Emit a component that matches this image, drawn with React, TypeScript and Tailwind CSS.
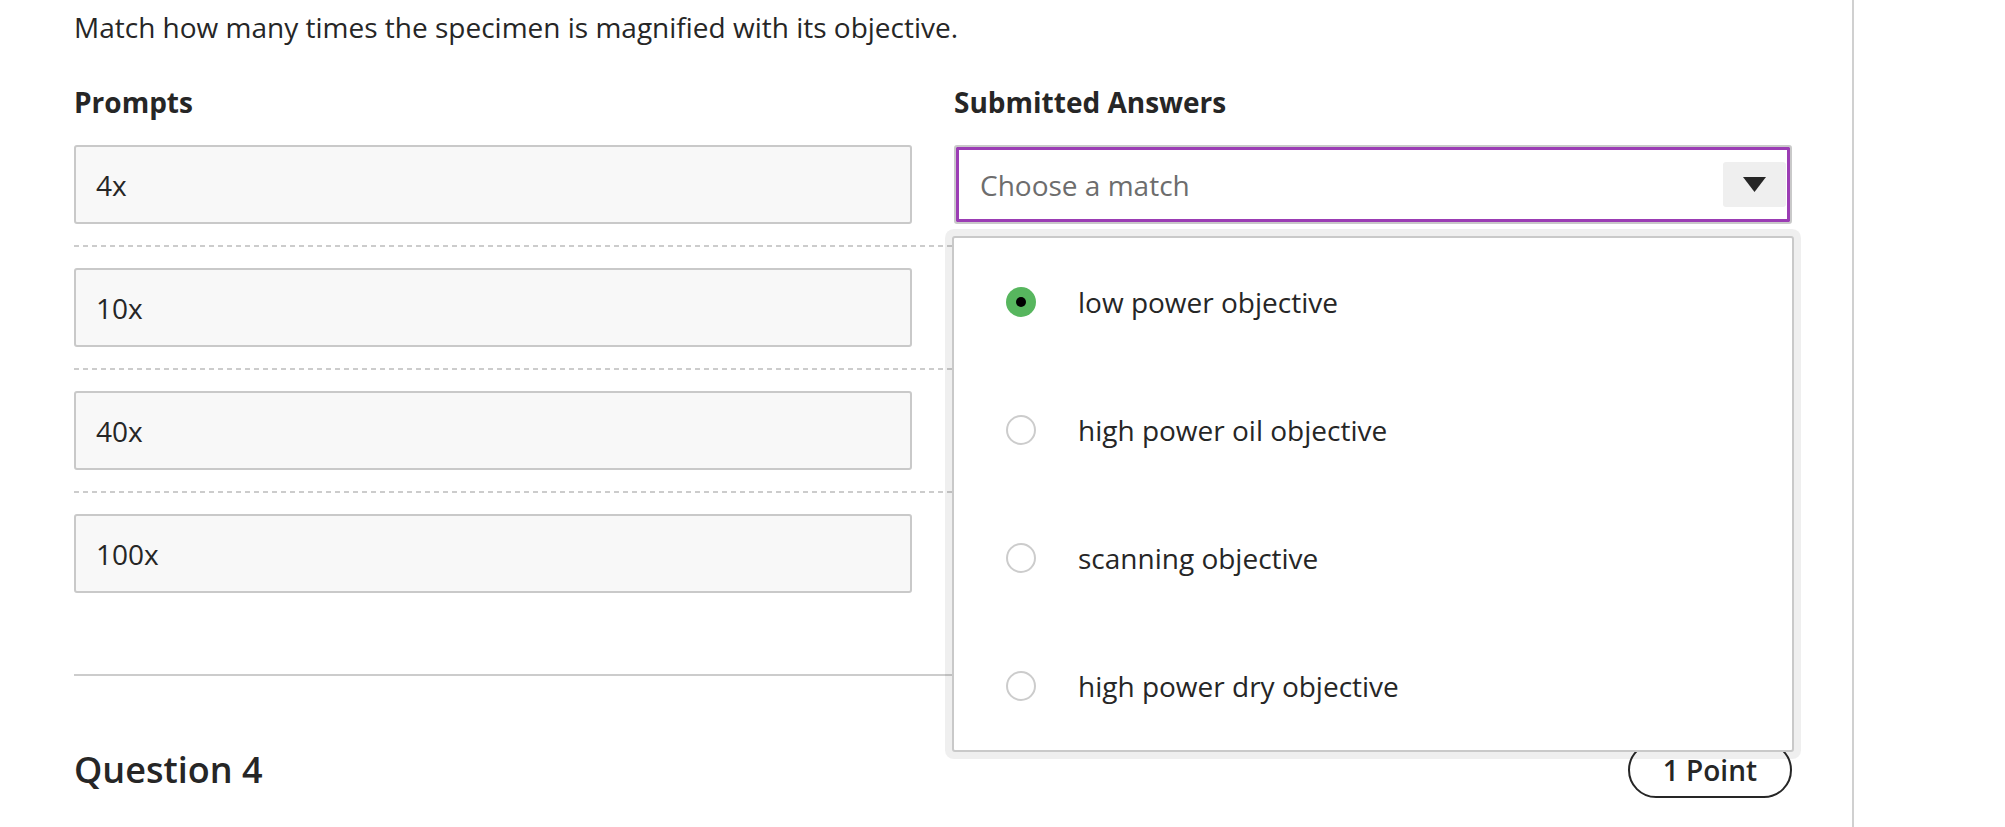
import React from "react";

const prompts = ["4x", "10x", "40x", "100x"];
const options = [
  { label: "low power objective", selected: true },
  { label: "high power oil objective", selected: false },
  { label: "scanning objective", selected: false },
  { label: "high power dry objective", selected: false },
];

function Dashed() {
  return (
    <div className="col-span-2 my-[21px] h-[2px] bg-[image:repeating-linear-gradient(90deg,#cccccc_0_5px,transparent_5px_9px)]" />
  );
}

function SelectBox() {
  return (
    <div className="flex h-[79px] items-center justify-between rounded-[3px] border-2 border-[#c9c9c9] bg-white shadow-[inset_0_0_0_3px_#9b3db4]">
      <span className="pl-[24px] text-[28px] leading-[38px] text-[#6d6d6d]">Choose a match</span>
      <span className="mr-[4px] flex h-[45px] w-[63px] items-center justify-center rounded-[3px] bg-[#efefef]">
        <svg width="23" height="15" viewBox="0 0 23 15">
          <polygon points="0,0 23,0 11.5,15" fill="#262626" />
        </svg>
      </span>
    </div>
  );
}

function Radio({ selected }: { selected: boolean }) {
  if (selected) {
    return (
      <span className="flex h-[30px] w-[30px] shrink-0 items-center justify-center rounded-full bg-[#57b65e]">
        <span className="h-[10px] w-[10px] rounded-full bg-black" />
      </span>
    );
  }
  return <span className="h-[30px] w-[30px] shrink-0 rounded-full border-2 border-[#cccccc] bg-white" />;
}

export default function App() {
  return (
    <div className="flex h-[827px] w-[2005px] overflow-hidden bg-white font-['Open_Sans',sans-serif] text-[#262626]">
      <div className="w-[1852px] shrink-0 pl-[74px] pr-[60px] pt-[8px]">
        <p className="text-[28px] leading-[38px]">
          Match how many times the specimen is magnified with its objective.
        </p>
        <div className="mt-[37px] grid grid-cols-2 gap-x-[42px]">
          <div className="text-[28px] font-bold leading-[38px]">Prompts</div>
          <div className="text-[28px] font-bold leading-[38px]">Submitted Answers</div>
        </div>
        <div className="mt-[24px] grid grid-cols-2 gap-x-[42px]">
          {prompts.map((p, i) => (
            <React.Fragment key={p}>
              {i > 0 && <Dashed />}
              <div className="flex h-[79px] items-center rounded-[3px] border-2 border-[#c9c9c9] bg-[#f8f8f8] pl-[20px] text-[28px] leading-[38px]">
                {p}
              </div>
              <div className="relative">
                {i === 0 && <SelectBox />}
                {i === 0 && (
                  <div className="absolute left-[-2px] right-[-2px] top-[91px] z-10 rounded-[3px] border-2 border-[#c9c9c9] bg-white shadow-[0_0_0_7px_rgba(0,0,0,0.063)]">
                    {options.map((o) => (
                      <div key={o.label} className="flex h-[128px] items-center gap-[42px] pl-[52px]">
                        <Radio selected={o.selected} />
                        <span className="text-[28px] leading-[38px]">{o.label}</span>
                      </div>
                    ))}
                  </div>
                )}
              </div>
            </React.Fragment>
          ))}
        </div>
        <div className="mt-[81px] h-[2px] bg-[#cccccc]" />
        <div className="mt-[66px] flex h-[56px] items-center justify-between">
          <h2 className="text-[36px] font-semibold leading-[50px]">Question 4</h2>
          <span className="flex h-[56px] items-center rounded-full border-2 border-[#262626] px-[33px] text-[28px] font-semibold leading-[38px]">
            1 Point
          </span>
        </div>
      </div>
      <div className="h-full w-[2px] shrink-0 bg-[#d0d0d0]" />
      <div className="flex-1" />
    </div>
  );
}
